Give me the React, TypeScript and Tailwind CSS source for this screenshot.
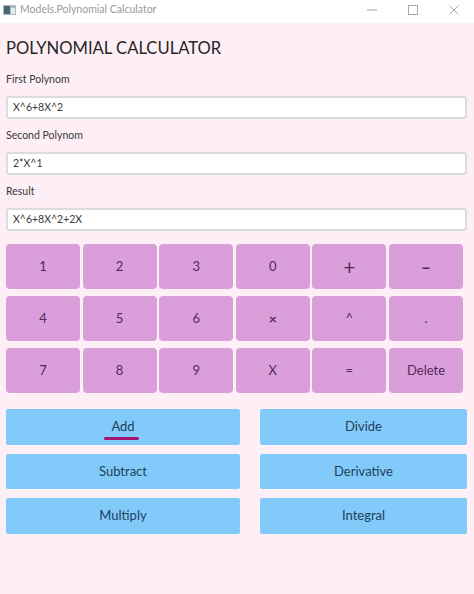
const keys = ['1', '2', '3', '0', '+', '–', '4', '5', '6', '×', '^', '.', '7', '8', '9', 'X', '=', 'Delete'];

const fields = [
    { label: 'First Polynom', value: 'X^6+8X^2' },
    { label: 'Second Polynom', value: '2*X^1' },
    { label: 'Result', value: 'X^6+8X^2+2X' },
];

const actions = ['Add', 'Divide', 'Subtract', 'Derivative', 'Multiply', 'Integral'];

function keyText(k: string) {
    if (k === '+') return 'text-[21px]';
    if (k === '–') return 'text-[17px] font-bold';
    if (k === '×') return 'text-[14px] font-bold';
    return 'text-[13px]';
}

function AppIcon() {
    return (
        <svg width="13" height="10" viewBox="0 0 13 10">
            <rect x="0" y="0" width="13" height="10" fill="#a9bcc2" />
            <rect x="1" y="1" width="6" height="8" fill="#47686f" />
            <rect x="8" y="3" width="4" height="6" fill="#e6ecee" />
        </svg>
    );
}

function TitleBar() {
    return (
        <div className="flex h-[23px] items-center bg-white pb-[4px] pl-[3px]">
            <AppIcon />
            <span className="ml-[4px] text-[10.5px] text-[#9a9a9a]">Models.Polynomial Calculator</span>
            <div className="ml-auto flex items-center gap-[31px] pr-[15px]">
                <svg width="10" height="10" viewBox="0 0 10 10" stroke="#a8a8a8" fill="none">
                    <path d="M0 5h10" />
                </svg>
                <svg width="10" height="10" viewBox="0 0 10 10" stroke="#a8a8a8" fill="none">
                    <rect x="0.5" y="0.5" width="9" height="9" />
                </svg>
                <svg width="10" height="10" viewBox="0 0 10 10" stroke="#a8a8a8" fill="none">
                    <path d="M0.5 0.5l9 9M9.5 0.5l-9 9" />
                </svg>
            </div>
        </div>
    );
}

export default function App() {
    return (
        <div className="flex h-[594px] w-[474px] flex-col overflow-hidden bg-[#fdeff5] font-['Lato',sans-serif] text-[#2b2b2b]">
            <TitleBar />
            <div className="px-[6px]">
                <div className="mt-[12px] h-[28px] text-[16.6px] leading-[26px] text-[#262626]">POLYNOMIAL CALCULATOR</div>
                {fields.map(f => (
                    <div key={f.label}>
                        <div className="mt-[7px] h-[18px] text-[10.5px] leading-[18px] text-[#3a3a3a]">{f.label}</div>
                        <div className="mt-[8px] flex h-[23px] w-[461px] items-center rounded-[3px] border-2 border-[#dcdcdc] bg-white pl-[5px] text-[10.5px] text-[#3a3a3a]">
                            {f.value}
                        </div>
                    </div>
                ))}
                <div className="mt-[13px] grid w-[457px] grid-cols-6 gap-x-[2.6px] gap-y-[7px]">
                    {keys.map(k => (
                        <div
                            key={k}
                            className={`flex h-[45px] items-center justify-center rounded-[4px] bg-[#da9edb] text-[#56285f] ${keyText(k)}`}
                        >
                            {k}
                        </div>
                    ))}
                </div>
                <div className="mt-[16px] grid w-[461px] grid-cols-[234px_207px] gap-x-[20px] gap-y-[9px]">
                    {actions.map(a => (
                        <div
                            key={a}
                            className="relative flex h-[35.5px] items-center justify-center rounded-[2px] bg-[#82caf9] text-[13px] text-[#1f3f5c]"
                        >
                            {a}
                            {a === 'Add' && (
                                <span className="absolute bottom-[5px] left-[98px] h-[3px] w-[35px] rounded-full bg-[#a6146f]" />
                            )}
                        </div>
                    ))}
                </div>
            </div>
        </div>
    );
}
